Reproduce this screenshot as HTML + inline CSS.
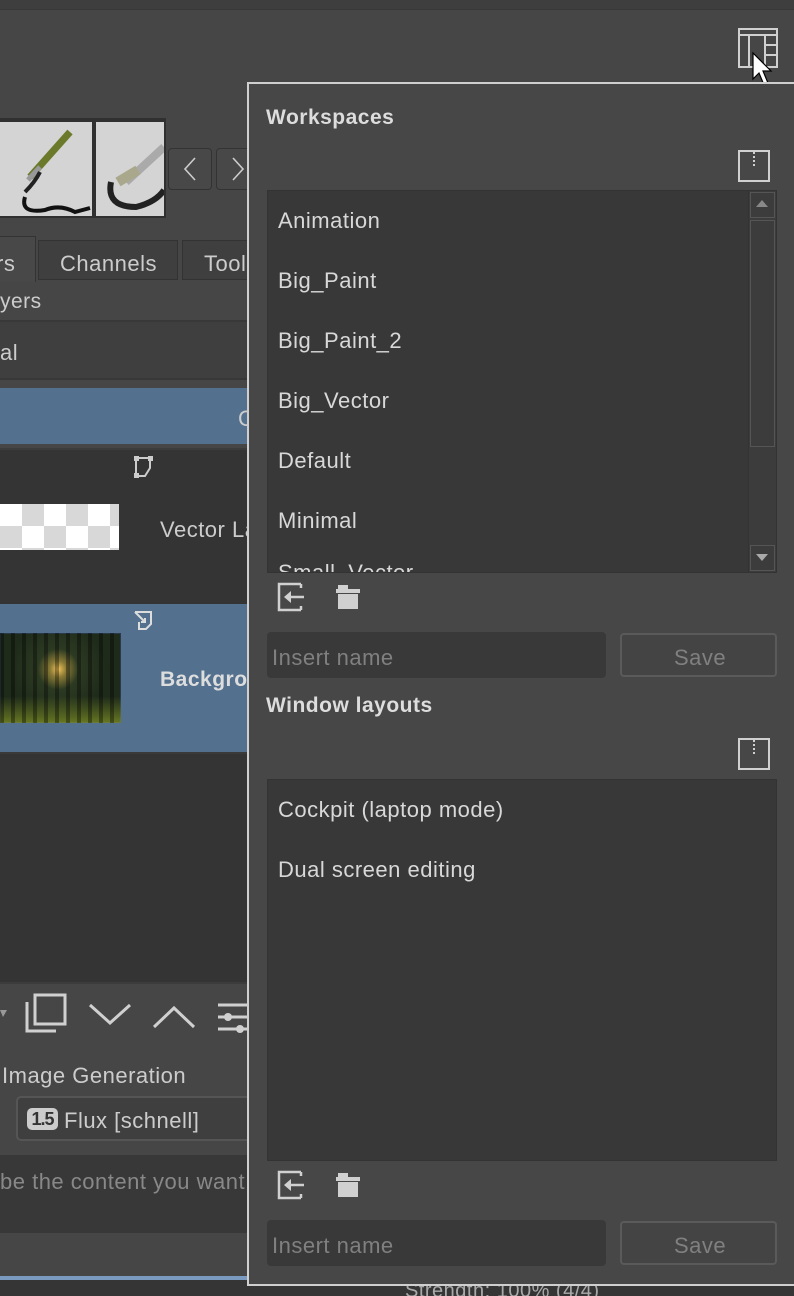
<!DOCTYPE html>
<html><head><style>
*{margin:0;padding:0;box-sizing:border-box}
html,body{width:794px;height:1296px;overflow:hidden}
body{background:#464646;font-family:"Liberation Sans",sans-serif;color:#d8d8d8;position:relative}
.a{position:absolute}
.t{font-size:22px;letter-spacing:0.5px;white-space:nowrap}
</style></head><body>
<div class="a" style="left:0;top:0;width:794px;height:10px;background:#3e3e3e;border-bottom:1px solid #383838"></div>
<svg class="a" style="left:737px;top:27px" width="50" height="66" viewBox="0 0 50 66"><g fill="none" stroke="#d0d0d0" stroke-width="2"><rect x="2" y="2" width="38" height="38"/><line x1="2" y1="8" x2="40" y2="8"/><line x1="12" y1="8" x2="12" y2="40"/><line x1="28" y1="8" x2="28" y2="40"/><line x1="28" y1="18" x2="40" y2="18"/><line x1="28" y1="28" x2="40" y2="28"/></g><path d="M16 26 L16 52 L22 46 L27 58 L31 56 L26 44 L34 44Z" fill="#fff" stroke="#000" stroke-width="1.2"/></svg>
<div class="a" style="left:0;top:118px;width:166px;height:100px;background:#303030"></div>
<div class="a" style="left:0;top:122px;width:92px;height:94px;background:#d4d4d4"></div>
<svg class="a" style="left:0;top:122px" width="92" height="94"><path d="M30 55 L70 10" stroke="#6b7a2a" stroke-width="7"/><path d="M28 58 L40 45" stroke="#999" stroke-width="5"/><path d="M25 70 Q35 60 40 50" stroke="#222" stroke-width="4" fill="none"/><path d="M25 75 Q20 92 45 88 Q60 82 75 90 L90 86" stroke="#111" stroke-width="4" fill="none"/></svg>
<div class="a" style="left:96px;top:122px;width:68px;height:94px;background:#d4d4d4"></div>
<svg class="a" style="left:96px;top:122px" width="68" height="94"><path d="M30 60 L68 25" stroke="#aaa" stroke-width="8"/><path d="M22 60 L42 48" stroke="#a9a88c" stroke-width="10"/><path d="M15 60 Q10 85 40 85 Q60 80 68 68" stroke="#222" stroke-width="6" fill="none"/></svg>
<div class="a" style="left:168px;top:148px;width:44px;height:42px;border:1px solid #333;border-radius:4px;background:#484848"></div>
<svg class="a" style="left:168px;top:148px" width="44" height="42"><path d="M27 10 L17 21 L27 32" stroke="#ccc" stroke-width="1.6" fill="none"/></svg>
<div class="a" style="left:216px;top:148px;width:40px;height:42px;border:1px solid #333;border-radius:4px;background:#484848"></div>
<svg class="a" style="left:216px;top:148px" width="40" height="42"><path d="M17 10 L27 21 L17 32" stroke="#ccc" stroke-width="1.6" fill="none"/></svg>
<div class="a" style="left:0;top:236px;width:36px;height:46px;background:#484848;border:1px solid #333;border-left:none;border-bottom:none"></div>
<div class="a t" style="left:-4px;top:251px;color:#ccc">rs</div>
<div class="a" style="left:38px;top:240px;width:140px;height:40px;background:#3f3f3f;border:1px solid #333"></div>
<div class="a t" style="left:60px;top:251px;color:#ccc">Channels</div>
<div class="a" style="left:182px;top:240px;width:70px;height:40px;background:#3f3f3f;border:1px solid #333"></div>
<div class="a t" style="left:204px;top:251px;color:#ccc">Tool</div>
<div class="a t" style="left:0;top:290px;font-size:21px;color:#ccc">yers</div>
<div class="a" style="left:0;top:320px;width:250px;height:60px;background:#3f3f3f;border-top:2px solid #383838;border-bottom:2px solid #383838"></div>
<div class="a t" style="left:0;top:340px;color:#ccc">al</div>
<div class="a" style="left:0;top:388px;width:250px;height:56px;background:#53708f"></div>
<div class="a t" style="left:238px;top:406px;color:#ccc">C</div>
<div class="a" style="left:0;top:448px;width:250px;height:534px;background:#343434;border-top:2px solid #3c3c3c"></div>
<svg class="a" style="left:133px;top:453px" width="22" height="26"><g fill="#ccc"><rect x="1" y="3" width="5" height="5"/><rect x="15" y="3" width="5" height="5"/><rect x="1" y="20" width="5" height="5"/></g><path d="M3 8 V20 M6 5 H15 M17 8 V15 L12 23 H6" stroke="#ccc" stroke-width="2" fill="none"/></svg>
<div class="a" style="left:0;top:504px;width:119px;height:46px;background:repeating-conic-gradient(#d8d8d8 0 25%,#fff 0 50%) 0 0/44px 44px"></div>
<div class="a t" style="left:160px;top:517px;color:#ccc">Vector La</div>
<div class="a" style="left:0;top:604px;width:250px;height:150px;background:#53708f;border-bottom:2px solid #3a3a3a"></div>
<svg class="a" style="left:133px;top:608px" width="22" height="22"><path d="M2 4 H18 V16 L13 21 H6 V14 M2 4 L12 14 M8 14 H12 V10" stroke="#ddd" stroke-width="2" fill="none"/></svg>
<div class="a" style="left:0;top:633px;width:121px;height:90px;border:1px solid #2a3a4a;background:radial-gradient(circle at 48% 40%,#f3c45a 0,#8a7a35 10%,#2c3a22 25%,#1e2a1a 60%),#223;"></div>
<div class="a" style="left:0;top:633px;width:121px;height:90px;background:repeating-linear-gradient(90deg,rgba(0,0,0,.35) 0 4px,transparent 4px 11px),linear-gradient(transparent 70%,rgba(150,170,40,.6))"></div>
<div class="a t" style="left:160px;top:668px;color:#ddd;font-weight:bold;font-size:21px">Backgrou</div>
<div class="a" style="left:0;top:982px;width:250px;height:2px;background:#3c3c3c"></div>
<svg class="a" style="left:0;top:990px" width="250" height="50"><path d="M0 20 L7 20 L3 27Z" fill="#999"/><g fill="none" stroke="#d0d0d0" stroke-width="3"><path d="M27 12 V41 H56"/><rect x="35" y="5" width="30" height="29"/><path d="M90 15 L110 33 L130 15"/><path d="M154 37 L174 18 L194 37"/><path d="M218 15 H250 M218 27 H250 M218 39 H250"/></g><circle cx="228" cy="27" r="4" fill="#d0d0d0"/><circle cx="240" cy="39" r="4" fill="#d0d0d0"/></svg>
<div class="a t" style="left:2px;top:1063px;color:#ccc">Image Generation</div>
<div class="a" style="left:16px;top:1096px;width:240px;height:45px;background:#3f3f3f;border:2px solid #555;border-radius:5px"></div>
<div class="a" style="left:27px;top:1108px;width:31px;height:22px;background:#ccc;border-radius:5px;color:#333;font-weight:bold;font-size:18px;line-height:22px;text-align:center;letter-spacing:-1px">1.5</div>
<div class="a t" style="left:64px;top:1108px;color:#ccc">Flux [schnell]</div>
<div class="a" style="left:0;top:1155px;width:250px;height:78px;background:#383838"></div>
<div class="a t" style="left:0;top:1169px;color:#888">be the content you want</div>
<div class="a" style="left:0;top:1276px;width:250px;height:4px;background:#7a9ac0"></div>
<div class="a" style="left:0;top:1280px;width:794px;height:16px;background:#353535"></div>
<div class="a t" style="left:405px;top:1280px;color:#aaa;font-size:20px">Strength: 100% (4/4)</div>
<div class="a" style="left:247px;top:82px;width:560px;height:1204px;background:#474747;border:2px solid #cfcfcf"></div>
<div class="a t" style="left:266px;top:106px;font-weight:bold;font-size:21px;color:#ddd">Workspaces</div>
<svg class="a" style="left:737px;top:149px" width="34" height="34"><rect x="2" y="2" width="30" height="30" fill="none" stroke="#d0d0d0" stroke-width="2"/><path d="M17 3 V17" stroke="#d0d0d0" stroke-width="2" stroke-dasharray="2 2"/></svg>
<div class="a" style="left:267px;top:190px;width:510px;height:383px;background:#383838;border:1px solid #333"></div>
<div class="a" style="left:748px;top:191px;width:28px;height:381px;background:#3c3c3c;border-left:1px solid #333"></div>
<div class="a" style="left:750px;top:192px;width:25px;height:26px;border:1px solid #555"></div>
<div class="a" style="left:756px;top:200px;border:6px solid transparent;border-bottom:7px solid #888;border-top:none"></div>
<div class="a" style="left:750px;top:220px;width:25px;height:227px;border:1px solid #555"></div>
<div class="a" style="left:750px;top:545px;width:25px;height:26px;border:1px solid #555"></div>
<div class="a" style="left:756px;top:554px;border:6px solid transparent;border-top:7px solid #aaa;border-bottom:none"></div>
<div class="a" style="left:268px;top:191px;width:480px;height:381px;overflow:hidden">
<div class="a t" style="left:10px;top:17px">Animation</div>
<div class="a t" style="left:10px;top:77px">Big_Paint</div>
<div class="a t" style="left:10px;top:137px">Big_Paint_2</div>
<div class="a t" style="left:10px;top:197px">Big_Vector</div>
<div class="a t" style="left:10px;top:257px">Default</div>
<div class="a t" style="left:10px;top:317px">Minimal</div>
<div class="a t" style="left:10px;top:369px">Small_Vector</div>
</div>
<svg class="a" style="left:276px;top:581px" width="90" height="32"><path d="M25 3 H3 V29 H25 M25 3 V7 M25 25 V29 M28 16 H13" stroke="#d0d0d0" stroke-width="2.5" fill="none"/><path d="M8 16 L15 10 V22Z" fill="#d0d0d0"/><rect x="62" y="4" width="10" height="4" fill="#d0d0d0"/><rect x="60" y="8" width="24" height="4" fill="#d0d0d0"/><rect x="62" y="13" width="20" height="15" fill="#d0d0d0"/></svg>
<div class="a" style="left:267px;top:632px;width:339px;height:46px;background:#393939;border-radius:4px"></div>
<div class="a t" style="left:272px;top:645px;color:#808080">Insert name</div>
<div class="a" style="left:620px;top:633px;width:157px;height:44px;border:2px solid #5a5a5a;border-radius:4px;background:#444"></div>
<div class="a t" style="left:674px;top:645px;color:#808080">Save</div>
<div class="a t" style="left:266px;top:694px;font-weight:bold;font-size:21px;color:#ddd">Window layouts</div>
<svg class="a" style="left:737px;top:737px" width="34" height="34"><rect x="2" y="2" width="30" height="30" fill="none" stroke="#d0d0d0" stroke-width="2"/><path d="M17 3 V17" stroke="#d0d0d0" stroke-width="2" stroke-dasharray="2 2"/></svg>
<div class="a" style="left:267px;top:779px;width:510px;height:382px;background:#383838;border:1px solid #333"></div>
<div class="a t" style="left:278px;top:797px">Cockpit (laptop mode)</div>
<div class="a t" style="left:278px;top:857px">Dual screen editing</div>
<svg class="a" style="left:276px;top:1169px" width="90" height="32"><path d="M25 3 H3 V29 H25 M25 3 V7 M25 25 V29 M28 16 H13" stroke="#d0d0d0" stroke-width="2.5" fill="none"/><path d="M8 16 L15 10 V22Z" fill="#d0d0d0"/><rect x="62" y="4" width="10" height="4" fill="#d0d0d0"/><rect x="60" y="8" width="24" height="4" fill="#d0d0d0"/><rect x="62" y="13" width="20" height="15" fill="#d0d0d0"/></svg>
<div class="a" style="left:267px;top:1220px;width:339px;height:46px;background:#393939;border-radius:4px"></div>
<div class="a t" style="left:272px;top:1233px;color:#808080">Insert name</div>
<div class="a" style="left:620px;top:1221px;width:157px;height:44px;border:2px solid #5a5a5a;border-radius:4px;background:#444"></div>
<div class="a t" style="left:674px;top:1233px;color:#808080">Save</div>
</body></html>
